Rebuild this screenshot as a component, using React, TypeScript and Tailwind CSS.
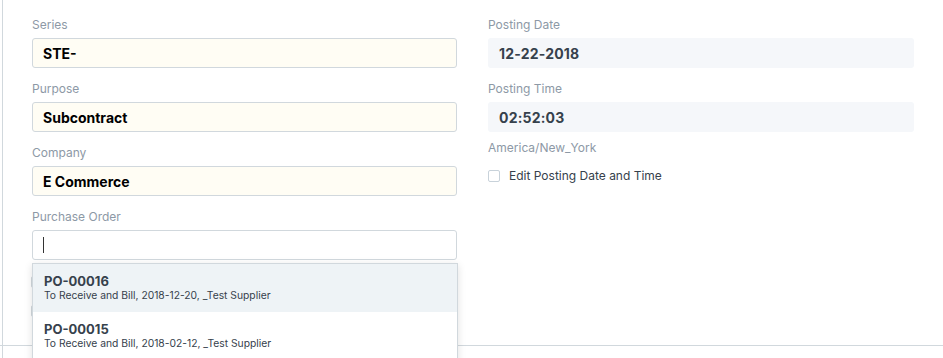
import React from "react";

const font = { fontFamily: "Inter, 'Noto Sans', sans-serif" };

function Label({ children }: { children: React.ReactNode }) {
  return <div className="h-[18px] leading-[20px] text-[12px] text-[#8d99a6] mb-[5px]">{children}</div>;
}

function YellowInput({ value }: { value: string }) {
  return (
    <div className="h-[30px] rounded-[3px] border border-[#d1d8dd] bg-[#fffdf4] pl-[10px] flex items-center text-[14px] font-bold text-black">
      {value}
    </div>
  );
}

function GreyInput({ value }: { value: string }) {
  return (
    <div className="h-[30px] rounded-[3px] bg-[#f5f7fa] pl-[11px] flex items-center text-[14px] font-bold text-[#36414c] tracking-[0.2px]">
      {value}
    </div>
  );
}

function Item({ title, sub, active }: { title: string; sub: string; active?: boolean }) {
  return (
    <div className={`h-[48px] pt-[9px] pl-[11px] ${active ? "bg-[#eef3f6]" : "bg-white"}`}>
      <div className="text-[13px] leading-[16px] font-bold text-[#36414c]">{title}</div>
      <div className="text-[10.3px] leading-[13px] text-[#36414c]">{sub}</div>
    </div>
  );
}

export default function App() {
  return (
    <div className="w-[943px] h-[358px] bg-white overflow-hidden flex flex-col" style={font}>
      <div className="h-[346px] border-b border-[#d1d8dd] shrink-0">
        <div className="ml-[2px] h-full border-l border-[#d1d8dd] flex pl-[29px] pt-[15px] gap-[31px]">
          <div className="w-[425px] flex flex-col">
            <Label>Series</Label>
            <YellowInput value="STE-" />
            <div className="h-[11px]" />
            <Label>Purpose</Label>
            <YellowInput value="Subcontract" />
            <div className="h-[11px]" />
            <Label>Company</Label>
            <YellowInput value="E Commerce" />
            <div className="h-[11px]" />
            <Label>Purchase Order</Label>
            <div className="relative">
              <div className="h-[30px] rounded-[3px] border border-[#d1d8dd] bg-white pl-[10px] flex items-center">
                <span className="w-[1px] h-[16px] bg-[#333]" />
              </div>
              <div className="pt-[16px] flex flex-col gap-[17px] ml-[-1px]">
                <div className="w-[12px] h-[12px] rounded-[2px] border border-[#d1d8dd]" />
                <div className="w-[12px] h-[12px] rounded-[2px] border border-[#d1d8dd]" />
              </div>
              <div className="absolute left-0 top-[33px] w-[426px] h-[120px] border border-[#d1d8dd] bg-white shadow-[0_2px_8px_rgba(0,0,0,0.12)]">
                <Item active title="PO-00016" sub="To Receive and Bill, 2018-12-20, _Test Supplier" />
                <Item title="PO-00015" sub="To Receive and Bill, 2018-02-12, _Test Supplier" />
              </div>
            </div>
          </div>
          <div className="w-[426px] flex flex-col">
            <Label>Posting Date</Label>
            <GreyInput value="12-22-2018" />
            <div className="h-[11px]" />
            <Label>Posting Time</Label>
            <GreyInput value="02:52:03" />
            <div className="mt-[6px] h-[18px] leading-[20px] text-[12px] text-[#8d99a6]">America/New_York</div>
            <div className="mt-[11px] h-[18px] flex items-center gap-[9px]">
              <div className="w-[12px] h-[12px] rounded-[2px] border border-[#c8d2da] bg-white" />
              <span className="text-[12px] text-[#36414c]">Edit Posting Date and Time</span>
            </div>
          </div>
        </div>
      </div>
      <div className="flex-1 ml-[2px] border-l border-[#d1d8dd]" />
    </div>
  );
}
